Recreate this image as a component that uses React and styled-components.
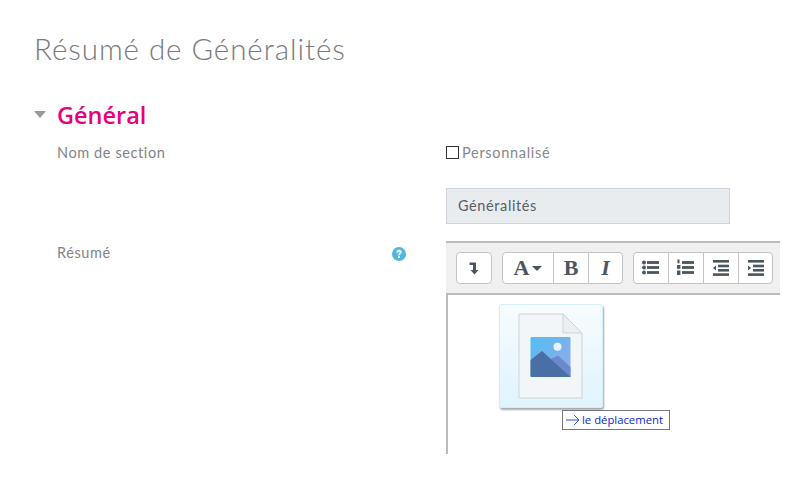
import React from 'react';
import styled, { createGlobalStyle } from 'styled-components';

const Global = createGlobalStyle`
  html, body { margin: 0; padding: 0; background: #fff; }
  body { width: 800px; height: 480px; overflow: hidden; font-family: "Lato", "Liberation Sans", sans-serif; }
`;
const Page = styled.div`
  width: 800px; height: 480px; box-sizing: border-box; padding: 30px 20px 0 34px; overflow: hidden;
  display: flex; flex-direction: column; position: relative;
`;
const Title = styled.h1`
  margin: 0; font-weight: 300; font-size: 29.5px; line-height: 38px; color: #77797c; letter-spacing: 0.95px;
`;
const SectionHead = styled.div`
  display: flex; align-items: center; gap: 10px; margin-top: 28px; height: 40px;
`;
const Caret = styled.span`
  width: 0; height: 0; border-left: 6.5px solid transparent; border-right: 6.5px solid transparent;
  border-top: 7px solid #999; margin-top: -3px;
`;
const SectionTitle = styled.h2`
  margin: 0 0 0 1px; font-family: "Open Sans", "Lato", sans-serif; font-size: 23.5px; font-weight: 600; color: #e6007e; line-height: 40px; letter-spacing: 0;
  position: relative; top: -1px;
`;
const FormRow = styled.div`
  display: grid; grid-template-columns: 412px 334px; margin-top: ${p => p.$mt || 0}px;
`;
const Label = styled.div`
  padding: ${p => p.$pt || 0}px 0 0 23px; font-size: 14.5px; color: #818487; line-height: 20px; letter-spacing: 0.6px;
  display: flex; justify-content: space-between; align-items: flex-start;
`;
const Help = styled.svg`
  width: 14px; height: 14px; margin: 4px 40px 0 0; flex: none;
`;
const CheckLine = styled.label`
  display: flex; align-items: center; gap: 3px; font-size: 14.5px; color: #85878a; line-height: 20px; letter-spacing: 0.7px;
`;
const Box = styled.span`
  width: 11px; height: 11px; border: 1px solid #333; background: #fff; display: block; margin-top: -1px;
`;
const Input = styled.div`
  width: 284px; height: 36px; box-sizing: border-box; background: #e9ecef; border: 1px solid #ced4da;
  padding: 0 11px; font-size: 14.5px; line-height: 34px; color: #575d63; letter-spacing: 0.6px;
`;
const Editor = styled.div`
  width: 334px; height: 213px; box-sizing: border-box; border-left: 2px solid #bbb; display: flex; flex-direction: column;
`;
const Toolbar = styled.div`
  height: 54px; box-sizing: border-box; flex: none; background: #f0f0f0; border-top: 2px solid #bbb; border-bottom: 2px solid #bbb;
  display: flex; align-items: flex-start; padding: 9px 0 0 10px; gap: 10px; margin-left: -2px;
`;
const Group = styled.div`
  display: flex; height: 32px; box-sizing: border-box; background: #fff; border: 1px solid #c4c4c4; border-radius: 4px;
`;
const Tool = styled.div`
  width: ${p => p.$w || 34}px; box-sizing: border-box; display: flex; align-items: center; justify-content: center; gap: 3px;
  color: #4c5661; font-family: "Liberation Serif", serif; font-weight: 700; font-size: 22px; line-height: 1;
  font-style: ${p => (p.$italic ? 'italic' : 'normal')};
  & + & { border-left: 1px solid #c4c4c4; }
`;
const Arrow = styled.span`
  width: 0; height: 0; border-left: 5px solid transparent; border-right: 5px solid transparent; border-top: 5px solid #4c5661;
`;
const Ghost = styled.div`
  position: absolute; left: 499px; top: 304px; width: 104px; height: 104px; box-sizing: border-box; border-radius: 3px;
  border: 1px solid #d4ecf7; background: linear-gradient(180deg, #f7fcfe 0%, #e0f3fd 100%);
  box-shadow: 1px 2px 2px rgba(90,100,110,.55); display: flex; align-items: center; justify-content: center;
`;
const Tip = styled.div`
  position: absolute; left: 562px; top: 410px; width: 108px; height: 20px; box-sizing: border-box; border: 1px solid #777; background: #fff;
  display: flex; align-items: center; gap: 2px; padding: 0 0 1px 2px;
  font-family: "Open Sans", "Liberation Sans", sans-serif; font-size: 11.3px; font-weight: 500; color: #0a28d8; white-space: nowrap;
`;

const Ico = ({ children }) => <svg width="20" height="18" viewBox="0 0 20 18" fill="#4c5661">{children}</svg>;

const lines = (x, w) => [3.5, 8.5, 13.5].map(y => <rect key={y} x={x} y={y - 1.4} width={w} height="2.8" />);

export default function App() {
  return (
    <Page>
      <Global />
      <Title>Résumé de Généralités</Title>
      <SectionHead><Caret /><SectionTitle>Général</SectionTitle></SectionHead>
      <FormRow $mt={7}>
        <Label>Nom de section</Label>
        <CheckLine><Box />Personnalisé</CheckLine>
      </FormRow>
      <FormRow $mt={25}>
        <span />
        <Input>Généralités</Input>
      </FormRow>
      <FormRow $mt={17}>
        <Label $pt={2}>
          Résumé
          <Help viewBox="0 0 14 14">
            <circle cx="7" cy="7" r="7" fill="#4fb8dc" />
            <path d="M4.4 5.4C4.5 3.8 5.6 2.8 7.1 2.8c1.6 0 2.7.9 2.7 2.3 0 1.9-2 1.9-2 3.2H6c0-2.2 1.8-2.3 1.8-3.1 0-.5-.3-.8-.8-.8-.6 0-.9.4-1 1z" fill="#fff" />
            <rect x="6" y="9.1" width="1.8" height="1.9" rx=".3" fill="#fff" />
          </Help>
        </Label>
        <Editor>
          <Toolbar>
            <Group>
              <Tool $w={34}>
                <svg width="12" height="14" viewBox="0 0 12 14" fill="#4c5661"><path d="M1.5 1.5h6.5v7.5h2.5L6.5 13.5 2.5 9H5V4H1.5z" /></svg>
              </Tool>
            </Group>
            <Group>
              <Tool $w={50}>A<Arrow /></Tool>
              <Tool $w={35}>B</Tool>
              <Tool $w={34} $italic>I</Tool>
            </Group>
            <Group>
              <Tool $w={34}>
                <Ico>{lines(6, 12)}{[3.5, 8.5, 13.5].map(y => <circle key={y} cx="3" cy={y} r="2" />)}</Ico>
              </Tool>
              <Tool $w={35}>
                <Ico>
                  {lines(6, 12)}
                  <rect x="1.5" y="0.5" width="2" height="3.8" /><rect x="1" y="6" width="3.4" height="3.8" /><rect x="1" y="11.5" width="3.4" height="4.5" />
                </Ico>
              </Tool>
              <Tool $w={35}>
                <Ico>
                  <rect x="2" y="1" width="16" height="2.6" /><rect x="7" y="5.7" width="11" height="2.6" /><rect x="7" y="10" width="11" height="2.6" /><rect x="2" y="14.3" width="16" height="2.6" />
                  <path d="M2 9l3-2.4v4.8z" />
                </Ico>
              </Tool>
              <Tool $w={34}>
                <Ico>
                  <rect x="2" y="1" width="16" height="2.6" /><rect x="7" y="5.7" width="11" height="2.6" /><rect x="7" y="10" width="11" height="2.6" /><rect x="2" y="14.3" width="16" height="2.6" />
                  <path d="M5 9l-3-2.4v4.8z" />
                </Ico>
              </Tool>
            </Group>
          </Toolbar>
        </Editor>
      </FormRow>
      <Ghost>
        <svg width="66" height="86" viewBox="0 0 66 86">
          <path d="M1 1H45L64 20V85H1z" fill="#f3f6f9" stroke="#cfd3d6" />
          <path d="M45 1L64 20H45z" fill="#eceeef" stroke="#cfd3d6" />
          <defs>
            <linearGradient id="sky" x1="0" y1="0" x2="1" y2="1">
              <stop offset="0" stopColor="#4fc0f0" /><stop offset="1" stopColor="#9da5ea" />
            </linearGradient>
          </defs>
          <rect x="12.5" y="24" width="40" height="40" rx="1" fill="url(#sky)" />
          <circle cx="39.5" cy="33.7" r="4" fill="#e6f4fc" />
          <path d="M31 47L40 42.5l12.5 11.5V64H35z" fill="#6a8ad0" />
          <path d="M12.5 47L24 38 52.5 64H13.5a1 1 0 0 1-1-1z" fill="#4a6fa5" />
        </svg>
      </Ghost>
      <Tip>
        <svg width="15" height="12" viewBox="0 0 15 12" fill="none" stroke="#2a4fd8"><path d="M1 6h13M9 1l5 5-5 5" /></svg>
        <span>le déplacement</span>
      </Tip>
    </Page>
  );
}
